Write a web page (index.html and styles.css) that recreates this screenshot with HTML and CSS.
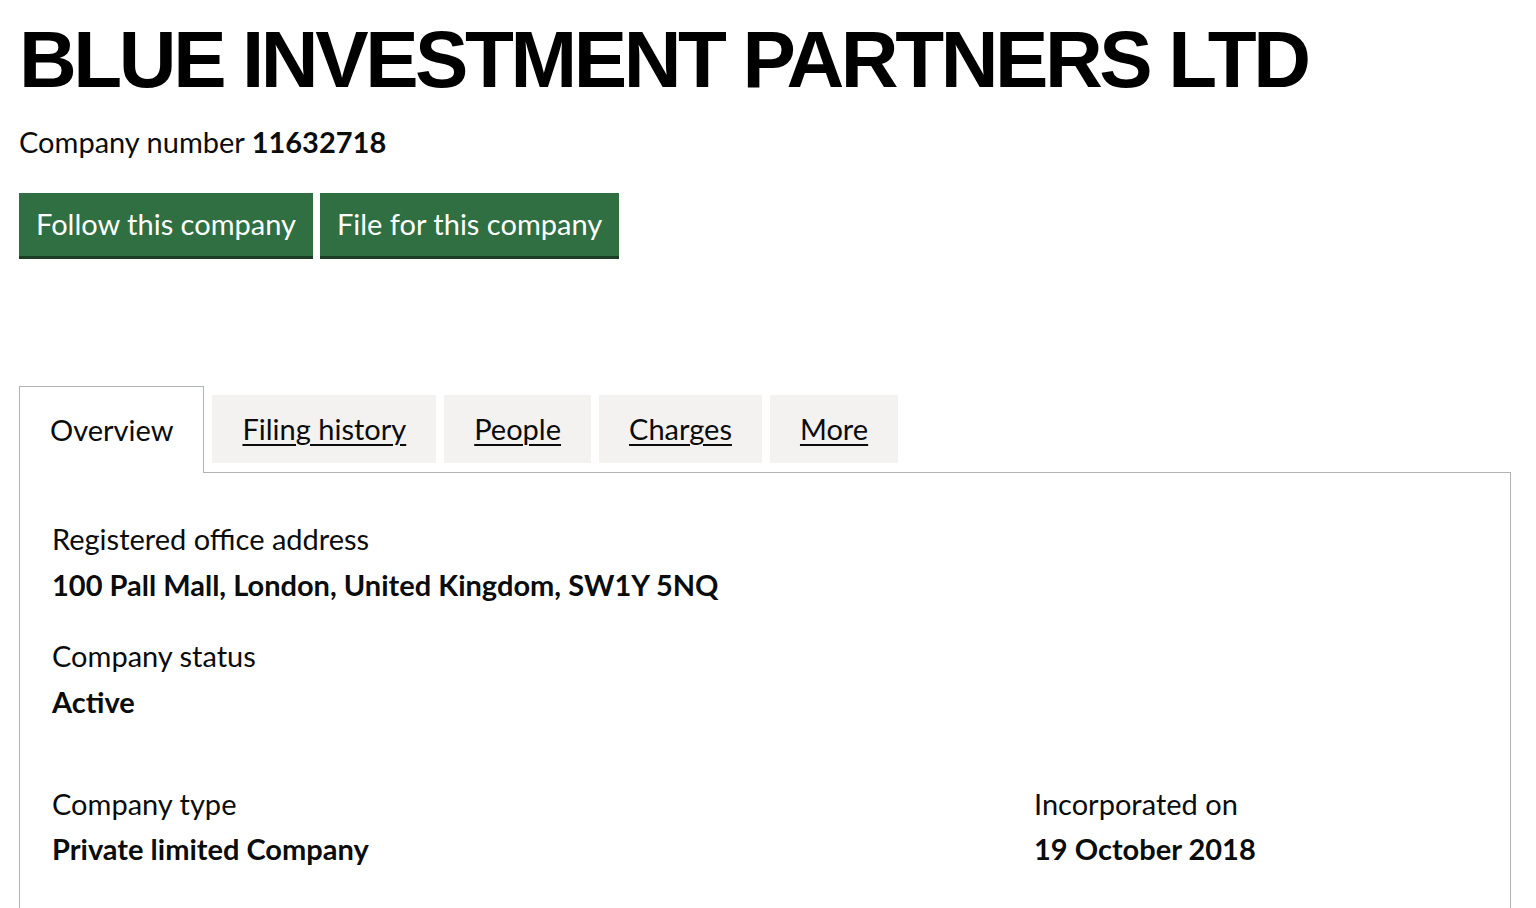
FILE: index.html
```html
<!DOCTYPE html>
<html lang="en">

<head>
    <meta charset="UTF-8">
    <title>BLUE INVESTMENT PARTNERS LTD overview</title>
    <link rel="stylesheet" href="styles.css">
</head>

<body>
    <div class="page">
        <h1 class="company-name">BLUE INVESTMENT PARTNERS LTD</h1>

        <p class="company-number">Company number <strong>11632718</strong></p>

        <div class="actions">
            <a class="button" href="#">Follow this company</a>
            <a class="button" href="#">File for this company</a>
        </div>

        <ul class="tabs">
            <li class="tab active"><span>Overview</span></li>
            <li class="tab"><a href="#">Filing history</a></li>
            <li class="tab"><a href="#">People</a></li>
            <li class="tab"><a href="#">Charges</a></li>
            <li class="tab"><a href="#">More</a></li>
        </ul>

        <div class="panel">
            <dl class="field">
                <dt>Registered office address</dt>
                <dd>100 Pall Mall, London, United Kingdom, SW1Y 5NQ</dd>
            </dl>

            <dl class="field">
                <dt>Company status</dt>
                <dd>Active</dd>
            </dl>

            <div class="field-row">
                <dl class="field">
                    <dt>Company type</dt>
                    <dd>Private limited Company</dd>
                </dl>
                <dl class="field">
                    <dt>Incorporated on</dt>
                    <dd>19 October 2018</dd>
                </dl>
            </div>
        </div>
    </div>
</body>

</html>
```

FILE: styles.css
```css
body {
    margin: 0;
    font-family: Lato, 'Noto Sans', sans-serif;
    color: #0b0c0c;
    background: #fff;
}

.page {
    padding: 0 19px;
}

.company-name {
    font-family: 'Liberation Sans', Arial, sans-serif;
    font-size: 80px;
    font-weight: bold;
    line-height: 1;
    letter-spacing: -3.4px;
    margin: 0;
    padding-top: 20px;
    color: #000;
}

.company-number {
    font-size: 29px;
    line-height: 1.2;
    margin: 25px 0 0;
}

.company-number strong {
    font-weight: bold;
}

.actions {
    display: flex;
    gap: 7px;
    margin-top: 33px;
}

.button {
    display: inline-block;
    background-color: #2f6f41;
    color: #fff;
    text-decoration: none;
    font-size: 29px;
    line-height: 1.2;
    padding: 14px 17px 14px;
    box-shadow: 0 3px 0 #1b3d24;
}

.tabs {
    display: flex;
    align-items: flex-end;
    gap: 8px;
    list-style: none;
    margin: 130px 0 0;
    padding: 0;
}

.tab {
    font-size: 29px;
    line-height: 1.2;
    background-color: #f3f2f1;
    padding: 17px 30px 17px;
    margin-bottom: 9px;
}

.tab a {
    color: #0b0c0c;
    text-decoration: underline;
    text-underline-offset: 4px;
    text-decoration-thickness: 2px;
}

.tab.active {
    background: #fff;
    border: 1px solid #b1b4b6;
    border-bottom: none;
    padding: 26px 30px 26px;
    margin-bottom: -1px;
    position: relative;
}

.panel {
    border: 1px solid #b1b4b6;
    margin-right: 6px;
    padding: 49px 32px 60px;
}

.field {
    margin: 0 0 36px;
}

.field dt {
    font-size: 29px;
    line-height: 1.2;
}

.field dd {
    margin: 11px 0 0;
    font-size: 29px;
    font-weight: bold;
    line-height: 1.2;
}

.field-row {
    display: grid;
    grid-template-columns: 982px 1fr;
    margin-top: 67px;
}
```
